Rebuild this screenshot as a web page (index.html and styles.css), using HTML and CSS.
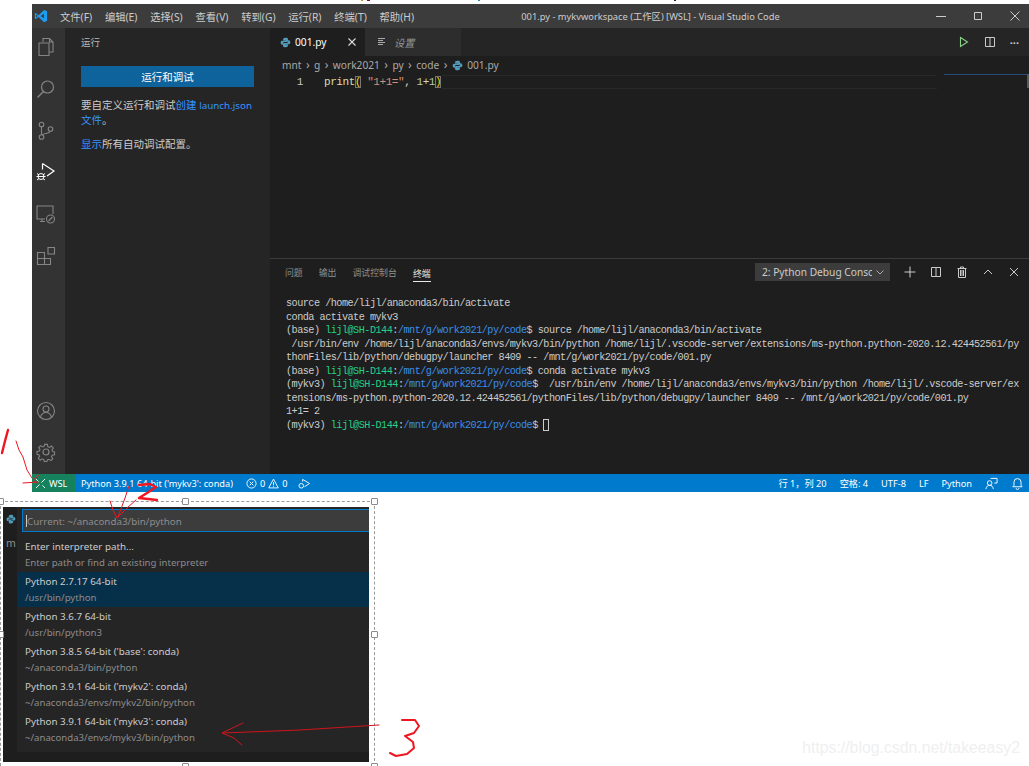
FILE: index.html
```html
<!DOCTYPE html>
<html lang="zh-CN">
  <head>
    <meta charset="UTF-8" />
    <title>001.py - mykvworkspace</title>
    <link rel="stylesheet" href="styles.css">
  </head>
  <body>
    <div class="page">
      <div class="top-strip">
        <i class="bit bit-a"></i><i class="bit bit-b"></i><i class="bit bit-c"></i><i class="bit bit-d"></i>
      </div>
      <div class="window">
        <header class="titlebar">
          <svg class="vs-logo" viewBox="0 0 16 16" width="14" height="14">
            <path d="M11.6 1 5.2 7 2 4.500 1 5v6l1 .5L5.200 9l6.400 6 3.400-1.500v-11zM4.400 8 2.400 9.700V6.300zm7 2.600L7.600 8l3.800-2.600z" fill="#1f9cf0"/>
          </svg>
          <nav class="menu">
            <span>文件(F)</span><span>编辑(E)</span><span>选择(S)</span><span>查看(V)</span>
            <span>转到(G)</span><span>运行(R)</span><span>终端(T)</span><span>帮助(H)</span>
          </nav>
          <div class="win-title">001.py - mykvworkspace (工作区) [WSL] - Visual Studio Code</div>
          <div class="win-buttons">
            <svg viewBox="0 0 12 12" width="12" height="12"><path d="M1 6.500h10" stroke="#ccc" fill="none"/></svg>
            <svg viewBox="0 0 12 12" width="12" height="12"><path d="M2.500 2.500h7v7h-7z" stroke="#ccc" fill="none"/></svg>
            <svg viewBox="0 0 12 12" width="12" height="12"><path d="M1.500 1.500l9 9m0-9l-9 9" stroke="#ccc" fill="none"/></svg>
          </div>
        </header>
        <div class="workbench">
          <aside class="activity">
            <svg viewBox="0 0 20 20" width="20" height="20"><path d="M7 5V1.500h6.500L17 5v10h-4M13.500 1.500V5H17M3 6h10v12.500H3z" stroke="#858585" stroke-width="1.100" fill="none"/></svg>
            <svg viewBox="0 0 20 20" width="20" height="20"><circle cx="11.500" cy="8" r="6" stroke="#858585" stroke-width="1.200" fill="none"/><path d="M7.500 12.500 1.500 18.500" stroke="#858585" stroke-width="1.400"/></svg>
            <svg viewBox="0 0 20 20" width="20" height="20"><g stroke="#858585" stroke-width="1.100" fill="none"><circle cx="5.500" cy="3.500" r="2.300"/><circle cx="5.500" cy="16" r="2.300"/><circle cx="14.500" cy="8" r="2.300"/><path d="M5.500 5.800v8M14 10.300c-.5 2.500-6 1.700-8 3.500"/></g></svg>
            <svg class="run-icon" viewBox="0 0 20 20" width="20" height="20"><path d="M6.500 1.500 18 9l-7 5M6.500 1.500v6" stroke="#fff" stroke-width="1.200" fill="none"/><g stroke="#fff" fill="none"><circle cx="5" cy="14.500" r="3"/><path d="M1 11.500l2 1.500M9 11.500l-2 1.500M.5 14.500h9M1 18l2-1.500M9 18l-2-1.500"/></g></svg>
            <svg viewBox="0 0 20 20" width="20" height="20"><g stroke="#858585" stroke-width="1.100" fill="none"><path d="M9 15H1V2h16v8M4 17.500h5M6 15v2.500"/><circle cx="14.500" cy="15" r="4"/><path d="M12.500 17l4-4"/></g></svg>
            <svg viewBox="0 0 20 20" width="20" height="20"><g stroke="#858585" stroke-width="1.100" fill="none"><path d="M1.500 6.500h7v12h-7zM1.500 12.500h13v6h-6M8.500 6.500v6"/><path d="M12 1.500h6.500V8H12z"/></g></svg>
            <div class="activity-bottom">
              <svg viewBox="0 0 20 20" width="20" height="20"><g stroke="#858585" stroke-width="1.100" fill="none"><circle cx="10" cy="10" r="8.500"/><circle cx="10" cy="8" r="3"/><path d="M4.500 16c1-3 3-4.500 5.500-4.500s4.500 1.500 5.500 4.500"/></g></svg>
              <svg viewBox="0 0 20 20" width="20" height="20"><g stroke="#858585" stroke-width="1.200" fill="none"><circle cx="10" cy="10" r="3"/><path d="M8.500 1.500h3l.5 2.600 1.800.8 2.200-1.500 2.100 2.100-1.500 2.200.8 1.800 2.100.5v3l-2.600.5-.8 1.800 1.500 2.200-2.100 2.100-2.200-1.500-1.800.8-.5 1.600h-3l-.5-2.100-1.800-.8-2.200 1.500-2.100-2.100 1.500-2.200-.8-1.800-2.100-.5v-3l2.600-.5.800-1.800-1.500-2.200 2.100-2.100 2.200 1.500 1.800-.8z" transform="translate(1 1) scale(.9)"/></g></svg>
            </div>
          </aside>
          <section class="sidebar">
            <div class="side-title">运行</div>
            <button class="run-button">运行和调试</button>
            <p class="side-text">要自定义运行和调试<a>创建 <span class="latin">launch.json</span><br>文件</a>。</p>
            <p class="side-text"><a>显示</a>所有自动调试配置。</p>
          </section>
          <main class="editor-area">
            <div class="tabs">
              <div class="tab tab-active">
                <svg class="py-icon" viewBox="0 0 16 16" width="11" height="11"><path d="M8 1C5 1 4.500 2.200 4.500 3.500V5h3.700v.6H3C1.500 5.600 1 7 1 8.300s.5 2.900 2 2.900h1.300V9.500c0-1.300 1-2.200 2.200-2.200h3.400c1 0 1.700-.8 1.700-1.800V3C11.600 1.700 10.500 1 8 1z" fill="#519aba"/><path d="M8 15c3 0 3.500-1.200 3.500-2.500V11H7.800v-.6H13c1.500 0 2-1.400 2-2.700s-.5-2.900-2-2.900h-1.300v1.700c0 1.300-1 2.200-2.200 2.200H6.100c-1 0-1.700.8-1.700 1.800V13c0 1.300 1.100 2 3.600 2z" fill="#519aba"/></svg>
                <span>001.py</span>
                <svg class="tab-close" viewBox="0 0 10 10" width="10" height="10"><path d="M1.500 1.500l7 7m0-7l-7 7" stroke="#ddd" stroke-width="1.100"/></svg>
              </div>
              <div class="tab tab-settings">
                <svg viewBox="0 0 12 12" width="12" height="12"><path d="M2 2.500h7M2 4.500h5M2 6.500h7M2 8.500h5" stroke="#aaa"/></svg>
                <em>设置</em>
              </div>
              <div class="tab-actions">
                <svg viewBox="0 0 12 12" width="12" height="12"><path d="M2.500 1.500 9.500 6l-7 4.500z" stroke="#89d185" stroke-width="1.100" fill="none"/></svg>
                <svg viewBox="0 0 12 12" width="12" height="12"><path d="M1.500 1.500h9v9h-9zM6 1.500v9" stroke="#ccc" fill="none"/></svg>
                <span class="dots">···</span>
              </div>
            </div>
            <div class="breadcrumb">
              <span>mnt</span><b>&#8250;</b><span>g</span><b>&#8250;</b><span>work2021</span><b>&#8250;</b><span>py</span><b>&#8250;</b><span>code</span><b>&#8250;</b>
              <svg class="py-icon" viewBox="0 0 16 16" width="11" height="11"><path d="M8 1C5 1 4.500 2.200 4.500 3.500V5h3.700v.6H3C1.500 5.600 1 7 1 8.300s.5 2.900 2 2.900h1.300V9.500c0-1.300 1-2.200 2.200-2.200h3.400c1 0 1.700-.8 1.700-1.800V3C11.600 1.700 10.500 1 8 1z" fill="#519aba"/><path d="M8 15c3 0 3.500-1.200 3.500-2.500V11H7.800v-.6H13c1.500 0 2-1.400 2-2.700s-.5-2.900-2-2.900h-1.300v1.700c0 1.300-1 2.200-2.200 2.200H6.100c-1 0-1.700.8-1.700 1.800V13c0 1.300 1.100 2 3.600 2z" fill="#519aba"/></svg>
              <span>001.py</span>
            </div>
            <div class="code">
              <div class="code-line">
                <span class="line-no">1</span>
                <code class="line-text"><span class="fn">print</span><span class="br">(</span> <span class="str">"1+1="</span>, <span class="num">1</span>+<span class="num">1</span><span class="br">)</span></code>
                <div class="line-rest"></div>
              </div>
              <div class="minimap-mark"></div>
              <div class="scroll-mark"></div>
            </div>
            <section class="panel">
              <div class="panel-head">
                <span>问题</span><span>输出</span><span>调试控制台</span><span class="panel-active">终端</span>
                <div class="panel-tools">
                  <div class="term-select"><span>2: Python Debug Consc</span>
                    <svg viewBox="0 0 10 10" width="10" height="10"><path d="M1.500 3.500 5 7l3.500-3.500" stroke="#aaa" fill="none"/></svg>
                  </div>
                  <svg viewBox="0 0 12 12" width="12" height="12"><path d="M6 .5v11M.5 6h11" stroke="#ccc"/></svg>
                  <svg viewBox="0 0 12 12" width="12" height="12"><path d="M1.500 1.500h9v9h-9zM6 1.500v9" stroke="#ccc" fill="none"/></svg>
                  <svg viewBox="0 0 12 12" width="12" height="12"><path d="M1.500 2.500h9M4.500 2.500V1h3v1.500M2.500 2.500v9h7v-9M4.500 4v6M6 4v6M7.500 4v6" stroke="#ccc" fill="none"/></svg>
                  <svg viewBox="0 0 12 12" width="12" height="12"><path d="M2 8l4-4 4 4" stroke="#ccc" fill="none"/></svg>
                  <svg viewBox="0 0 12 12" width="12" height="12"><path d="M2 2l8 8m0-8l-8 8" stroke="#ccc" fill="none"/></svg>
                </div>
              </div>
              <pre class="terminal">source /home/lijl/anaconda3/bin/activate
conda activate mykv3
(base) <span class="t-green">lijl@SH-D144</span>:<span class="t-blue">/mnt/g/work2021/py/code</span>$ source /home/lijl/anaconda3/bin/activate
 /usr/bin/env /home/lijl/anaconda3/envs/mykv3/bin/python /home/lijl/.vscode-server/extensions/ms-python.python-2020.12.424452561/py
thonFiles/lib/python/debugpy/launcher 8409 -- /mnt/g/work2021/py/code/001.py
(base) <span class="t-green">lijl@SH-D144</span>:<span class="t-blue">/mnt/g/work2021/py/code</span>$ conda activate mykv3
(mykv3) <span class="t-green">lijl@SH-D144</span>:<span class="t-blue">/mnt/g/work2021/py/code</span>$  /usr/bin/env /home/lijl/anaconda3/envs/mykv3/bin/python /home/lijl/.vscode-server/ex
tensions/ms-python.python-2020.12.424452561/pythonFiles/lib/python/debugpy/launcher 8409 -- /mnt/g/work2021/py/code/001.py
1+1= 2
(mykv3) <span class="t-green">lijl@SH-D144</span>:<span class="t-blue">/mnt/g/work2021/py/code</span>$ <i class="cursor"></i></pre>
            </section>
          </main>
        </div>
        <footer class="statusbar">
          <div class="wsl">
            <svg viewBox="0 0 12 12" width="11" height="11"><path d="M1 11 5 7M7 5l4-4M1 1l3 3M8 8l3 3" stroke="#fff" fill="none"/></svg>
            <span>WSL</span>
          </div>
          <span class="st-python">Python 3.9.1 64-bit ('mykv3': conda)</span>
          <div class="st-item">
            <svg viewBox="0 0 12 12" width="11" height="11"><circle cx="6" cy="6" r="5" stroke="#fff" fill="none"/><path d="M4 4l4 4m0-4l-4 4" stroke="#fff"/></svg>
            <span>0</span>
            <svg viewBox="0 0 12 12" width="11" height="11"><path d="M6 1.200 11.200 10.800H.8z" stroke="#fff" fill="none"/><path d="M6 4.500v3.500M6 9v1" stroke="#fff"/></svg>
            <span>0</span>
          </div>
          <svg class="st-debug" viewBox="0 0 14 12" width="13" height="11"><path d="M5 1.500 12.500 6 7 9.500M5 1.500V4" stroke="#fff" fill="none"/><circle cx="3.500" cy="8.500" r="2.500" stroke="#fff" fill="none"/></svg>
          <div class="st-right">
            <span>行 1，列 20</span><span>空格: 4</span><span>UTF-8</span><span>LF</span><span>Python</span>
            <svg viewBox="0 0 14 14" width="13" height="13"><path d="M1 13c.5-3 2-4 4-4s3.500 1 4 4M5 9a2.500 2.500 0 1 0 0-5 2.500 2.500 0 0 0 0 5zM6 1.500h7v5h-3" stroke="#fff" fill="none"/></svg>
            <svg viewBox="0 0 14 14" width="13" height="13"><path d="M2 10.500h10L10.800 9V5.500a3.800 3.800 0 0 0-7.600 0V9zM5.500 12a1.500 1.500 0 0 0 3 0" stroke="#fff" fill="none"/></svg>
          </div>
        </footer>
      </div>

      <div class="shot">
        <div class="shot-side">
          <svg class="py-icon" viewBox="0 0 16 16" width="10" height="10"><path d="M8 1C5 1 4.500 2.200 4.500 3.500V5h3.700v.6H3C1.500 5.600 1 7 1 8.300s.5 2.900 2 2.900h1.300V9.500c0-1.300 1-2.200 2.200-2.200h3.400c1 0 1.700-.8 1.700-1.800V3C11.600 1.700 10.500 1 8 1z" fill="#519aba"/><path d="M8 15c3 0 3.500-1.200 3.500-2.500V11H7.800v-.6H13c1.500 0 2-1.400 2-2.700s-.5-2.900-2-2.900h-1.300v1.700c0 1.300-1 2.200-2.200 2.200H6.100c-1 0-1.700.8-1.700 1.800V13c0 1.300 1.100 2 3.600 2z" fill="#519aba"/></svg>
          <span>m</span>
        </div>
        <div class="picker">
          <div class="picker-input"><i class="caret"></i>Current: ~/anaconda3/bin/python</div>
          <ul class="picker-list">
            <li><span>Enter interpreter path...</span><small>Enter path or find an existing interpreter</small></li>
            <li class="picked"><span>Python 2.7.17 64-bit</span><small>/usr/bin/python</small></li>
            <li><span>Python 3.6.7 64-bit</span><small>/usr/bin/python3</small></li>
            <li><span>Python 3.8.5 64-bit ('base': conda)</span><small>~/anaconda3/bin/python</small></li>
            <li><span>Python 3.9.1 64-bit ('mykv2': conda)</span><small>~/anaconda3/envs/mykv2/bin/python</small></li>
            <li><span>Python 3.9.1 64-bit ('mykv3': conda)</span><small>~/anaconda3/envs/mykv3/bin/python</small></li>
          </ul>
        </div>
      </div>

      <!-- selection frame of the pasted screenshot -->
      <div class="sel-frame"></div>
      <i class="handle h1"></i><i class="handle h2"></i><i class="handle h3"></i><i class="handle h4"></i>
      <i class="handle h5"></i><i class="handle h6"></i><i class="handle h7"></i>

      <!-- hand drawn notes -->
      <svg class="notes" viewBox="0 0 1029 766" width="1029" height="766">
        <g fill="none" stroke="#ee1620" stroke-linecap="round" stroke-linejoin="round">
          <path stroke-width="2.400" d="M8 430 5 441 2 453"/>
          <path d="M16 441 19 450 23 457 27 470 32 478M23 483 38 482M39 475 33 480 36 483"/>
          <path stroke-width="2.400" d="M139 485 150 484 156 487 147 493 139 498 157 500"/>
          <path d="M129 486 125 498 118 517M110 501 113 510 117 518 127 508 136 500"/>
          <path d="M379 725 300 730 223 733M243 723 222 733 234 738 242 745" stroke="#d0141c"/>
          <path stroke-width="2" d="M402 720 415 720 419 726 414 733 405 736 413 742 414 748 407 754 396 756 390 753"/>
        </g>
      </svg>

      <div class="watermark">https://blog.csdn.net/takeeasy2</div>
    </div>
  </body>
</html>
```

FILE: styles.css
```css
/* Reset */
* {
  margin: 0;
  padding: 0;
  box-sizing: border-box;
}
body {
  font-family: "Noto Sans", "Noto Sans CJK SC", sans-serif;
  background: #fff;
  overflow: hidden;
}
.page {
  position: relative;
  width: 1029px;
  height: 766px;
  overflow: hidden;
}
svg {
  flex: none;
}
.top-strip {
  position: relative;
  height: 4px;
}
.bit {
  position: absolute;
  top: 0;
  height: 1px;
}
.bit-a { left: 361px; width: 2px; background: #d98a20; }
.bit-b { left: 367px; width: 3px; background: #7a1030; }
.bit-c { left: 478px; width: 2px; background: #2b8ac4; }
.bit-d { left: 674px; width: 2px; background: #222; }

/* VS Code window */
.window {
  margin-left: 32px;
  height: 488px;
  display: flex;
  flex-direction: column;
  color: #ccc;
}
.titlebar {
  height: 24px;
  background: #3c3c3c;
  display: flex;
  align-items: center;
  position: relative;
  font-size: 10.300px;
}
.vs-logo {
  margin: 0 9px 0 2px;
}
.menu {
  display: flex;
  gap: 12.800px;
  padding-left: 3px;
}
.win-title {
  position: absolute;
  left: 0;
  right: 0;
  padding-left: 240px;
  text-align: center;
  font-size: 9.300px;
  color: #ccc;
}
.win-buttons {
  margin-left: auto;
  display: flex;
  gap: 25px;
  padding-right: 8px;
}
.workbench {
  flex: 1;
  display: flex;
  min-height: 0;
}
.activity {
  width: 33px;
  background: #333;
  display: flex;
  flex-direction: column;
  align-items: center;
  gap: 21.800px;
  padding: 9px 6px 0 0;
}
.activity-bottom {
  margin-top: auto;
  display: flex;
  flex-direction: column;
  gap: 21px;
  padding-bottom: 12px;
}
.sidebar {
  width: 205px;
  background: #252526;
  padding: 0 16px;
}
.side-title {
  font-size: 9.500px;
  line-height: 30px;
  color: #bbb;
}
.run-button {
  display: block;
  width: 173px;
  height: 21px;
  margin: 8px 0 11px;
  border: none;
  background: #0e639c;
  color: #fff;
  font: inherit;
  font-size: 10.500px;
}
.side-text {
  font-size: 10.500px;
  line-height: 14px;
  margin-bottom: 10px;
  color: #ccc;
  white-space: nowrap;
}
.side-text a {
  color: #3794ff;
}
.latin {
  font-size: 9.800px;
}
.editor-area {
  flex: 1;
  min-width: 0;
  display: flex;
  flex-direction: column;
  background: #1e1e1e;
}
.tabs {
  height: 28px;
  background: #252526;
  display: flex;
  align-items: stretch;
  font-size: 10.200px;
}
.tab {
  display: flex;
  align-items: center;
}
.tab-active {
  width: 95px;
  background: #1e1e1e;
  color: #fff;
  padding-left: 10px;
  gap: 4px;
}
.tab-close {
  margin-left: auto;
  margin-right: 8px;
}
.tab-settings {
  width: 96px;
  background: #2d2d2d;
  color: #969696;
  padding-left: 11px;
  gap: 6px;
}
.tab-actions {
  margin-left: auto;
  display: flex;
  align-items: center;
  gap: 14px;
  padding-right: 10px;
}
.dots {
  font-size: 11px;
  font-weight: 700;
  color: #ccc;
}
.breadcrumb {
  height: 18px;
  display: flex;
  align-items: center;
  gap: 4.400px;
  padding-left: 12px;
  font-size: 10.200px;
  color: #a9a9a9;
}
.breadcrumb b {
  font-weight: 400;
  font-size: 12px;
  line-height: 12px;
}
.code {
  flex: 1;
  position: relative;
  min-height: 0;
}
.code-line {
  height: 14px;
  display: flex;
  align-items: center;
  font-family: "Liberation Mono", monospace;
  font-size: 11px;
  letter-spacing: -.44px;
  padding-top: 1px;
}
.line-no {
  width: 54px;
  padding-right: 21px;
  text-align: right;
  color: #c6c6c6;
}
.line-text {
  font: inherit;
  white-space: pre;
  color: #d4d4d4;
}
.line-rest {
  width: 495px;
  height: 14px;
  margin-left: 1px;
  border-top: 1px solid #282828;
  border-bottom: 1px solid #282828;
}
.fn { color: #dcdcaa; }
.str { color: #ce9178; }
.num { color: #b5cea8; }
.br {
  outline: 1px solid #777;
  outline-offset: -1px;
  color: #ffd700;
}
.minimap-mark {
  position: absolute;
  top: 0;
  left: 674px;
  width: 83px;
  height: 1px;
  background: #264f78;
}
.scroll-mark {
  position: absolute;
  top: 0;
  right: 0;
  width: 2px;
  height: 14px;
  background: #5a5a5a;
}

/* Bottom panel */
.panel {
  height: 216px;
  border-top: 1px solid #3c3c3c;
  display: flex;
  flex-direction: column;
}
.panel-head {
  height: 26px;
  display: flex;
  align-items: center;
  gap: 16px;
  padding-left: 15px;
  font-size: 8.900px;
  color: #8f8f8f;
}
.panel-active {
  color: #e7e7e7;
  line-height: 14px;
  padding-top: 2px;
  border-bottom: 1px solid #e7e7e7;
  margin-top: 3px;
}
.panel-tools {
  margin-left: auto;
  display: flex;
  align-items: center;
  gap: 14px;
  padding-right: 9px;
}
.term-select {
  width: 135px;
  height: 18px;
  background: #3c3c3c;
  color: #ccc;
  font-size: 10.200px;
  display: flex;
  align-items: center;
  justify-content: space-between;
  padding: 0 5px 0 7px;
  white-space: nowrap;
  overflow: hidden;
}
.term-select span {
  width: 110px;
  overflow: hidden;
}
.terminal {
  padding: 12px 0 0 16px;
  font-family: "Liberation Mono", monospace;
  font-size: 10.200px;
  letter-spacing: -.52px;
  line-height: 13.550px;
  color: #ccc;
}
.t-green { color: #23d18b; }
.t-blue { color: #3b8eea; }
.cursor {
  display: inline-block;
  width: 6px;
  height: 12px;
  border: 1px solid #ccc;
  vertical-align: -3px;
}

/* Status bar */
.statusbar {
  height: 18px;
  background: #007acc;
  color: #fff;
  display: flex;
  align-items: center;
  font-size: 9.200px;
}
.wsl {
  width: 43px;
  height: 100%;
  background: #16825d;
  display: flex;
  align-items: center;
  gap: 3px;
  padding-left: 3px;
}
.st-python {
  margin-left: 6px;
}
.st-item {
  display: flex;
  align-items: center;
  gap: 3px;
  margin-left: 13px;
}
.st-debug {
  margin-left: 11px;
}
.st-right {
  margin-left: auto;
  display: flex;
  align-items: center;
  gap: 13px;
  padding-right: 5px;
}

/* Pasted picker screenshot */
.shot {
  position: absolute;
  left: 3px;
  top: 507px;
  width: 366px;
  height: 255px;
  background: #1e1e1e;
  display: flex;
}
.shot-side {
  width: 14px;
  display: flex;
  flex-direction: column;
  align-items: center;
  gap: 12px;
  padding: 7px 0 0 2px;
  font-size: 10.500px;
  color: #8f8f8f;
}
.picker {
  flex: 1;
  height: 245px;
  background: #252526;
  padding-top: 2px;
  font-size: 9.800px;
}
.picker-input {
  height: 23px;
  margin: 0 0 5px 5px;
  background: #3c3c3c;
  border: 1px solid #007acc;
  border-right: none;
  display: flex;
  align-items: center;
  color: #8c8c8c;
  padding: 1px 0 0 3px;
  font-size: 9.800px;
}
.caret {
  width: 1px;
  height: 12px;
  background: #ccc;
}
.picker-list {
  list-style: none;
}
.picker-list li {
  height: 35px;
  padding: 2px 0 0 8px;
  display: flex;
  flex-direction: column;
  line-height: 16px;
  color: #ccc;
}
.picker-list small {
  font-size: 9.650px;
  color: #8c8c8c;
}
.picker-list .picked {
  background: #062f4a;
}

.sel-frame {
  position: absolute;
  left: 0;
  top: 501px;
  width: 375px;
  height: 270px;
  border: 1px dashed #9a9a9a;
}
.handle {
  position: absolute;
  width: 7px;
  height: 7px;
  background: #fff;
  border: 1px solid #8a8a8a;
  border-radius: 1px;
}
.h1 { left: -3px; top: 498px; }
.h2 { left: 182px; top: 498px; }
.h3 { left: 371px; top: 498px; }
.h4 { left: -3px; top: 631px; }
.h5 { left: 371px; top: 631px; }
.h6 { left: 182px; top: 763px; }
.h7 { left: 371px; top: 763px; }
.notes {
  position: absolute;
  left: 0;
  top: 0;
  pointer-events: none;
}
.watermark {
  position: absolute;
  right: 9px;
  top: 739px;
  font-family: "Liberation Sans", Arial, sans-serif;
  font-size: 15.800px;
  color: #efefef;
}
```
